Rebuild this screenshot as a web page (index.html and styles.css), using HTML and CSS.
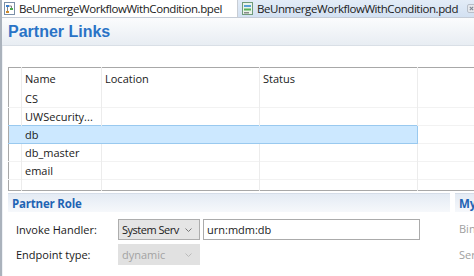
FILE: index.html
```html
<!DOCTYPE html>
<html>
<head>
<meta charset="utf-8">
<link rel="stylesheet" href="styles.css">
</head>
<body>
<div class="window">
  <div class="tabs">
    <div class="tab">
      <svg class="ficon" width="13" height="13" viewBox="0 0 13 13"><rect x="1.5" y="0.5" width="10" height="12" fill="#fff" stroke="#7a8fa8"/><rect x="3" y="3" width="3" height="2" fill="#3a7fd0"/><rect x="7" y="6" width="3" height="2" fill="#4aa84a"/><rect x="3" y="9" width="3" height="2" fill="#d08a2a"/><path d="M4.5 5v4M6 4h2.5v2" stroke="#666" fill="none" stroke-width="0.8"/></svg>
      <span>BeUnmergeWorkflowWithCondition.bpel</span>
    </div>
    <div class="tab active">
      <svg class="ficon" width="13" height="13" viewBox="0 0 13 13"><rect x="1.5" y="0.5" width="10" height="12" fill="#eaf4ea" stroke="#6f9a7a"/><rect x="3" y="3" width="7" height="2" fill="#5aa0d8"/><rect x="3" y="6.5" width="7" height="2" fill="#58b058"/><rect x="3" y="10" width="5" height="1.5" fill="#8a8a8a"/></svg>
      <span>BeUnmergeWorkflowWithCondition.pdd</span>
      <svg class="close" width="9" height="9" viewBox="0 0 9 9"><rect x="0.5" y="0.5" width="8" height="8" rx="1.5" fill="#e6e9ee" stroke="#b7bec8"/><path d="M2.8 2.8l3.4 3.4M6.2 2.8l-3.4 3.4" stroke="#7d8792" stroke-width="1.1"/></svg>
    </div>
  </div>
  <div class="form-header">Partner Links</div>
  <div class="form-body">
    <table class="links">
      <colgroup>
        <col class="c0"><col class="c1"><col class="c2"><col class="c3"><col class="c4">
      </colgroup>
      <thead>
        <tr><th></th><th>Name</th><th>Location</th><th>Status</th><th></th></tr>
      </thead>
      <tbody>
        <tr><td></td><td>CS</td><td></td><td></td><td></td></tr>
        <tr><td></td><td>UWSecurity...</td><td></td><td></td><td></td></tr>
        <tr class="sel"><td></td><td>db</td><td></td><td class="last"></td><td></td></tr>
        <tr><td></td><td>db_master</td><td></td><td></td><td></td></tr>
        <tr><td></td><td>email</td><td></td><td></td><td></td></tr>
        <tr class="empty"><td></td><td></td><td></td><td></td><td></td></tr>
      </tbody>
    </table>
    <div class="sections">
      <section class="sec">
        <div class="sec-title">Partner Role</div>
        <div class="sec-body">
          <div class="field">
            <span class="label">Invoke Handler:</span>
            <div class="combo"><span>System Serv</span><svg class="chev" width="7" height="4" viewBox="0 0 7 4"><path d="M0.5 0.5l3 3 3-3" stroke="#777" fill="none"/></svg></div>
            <div class="text-input">urn:mdm:db</div>
          </div>
          <div class="field">
            <span class="label">Endpoint type:</span>
            <div class="combo disabled"><span>dynamic</span><svg class="chev" width="7" height="4" viewBox="0 0 7 4"><path d="M0.5 0.5l3 3 3-3" stroke="#bbb" fill="none"/></svg></div>
          </div>
        </div>
      </section>
      <section class="sec side">
        <div class="sec-title">My Role</div>
        <div class="side-body">
          <div class="side-label">Binding</div>
          <div class="side-label">Service</div>
          <div class="side-label">Allow</div>
        </div>
      </section>
    </div>
  </div>
</div>
</body>
</html>
```
FILE: styles.css
```css
html, body {
  margin: 0;
  padding: 0;
  background: #fff;
}
body {
  width: 474px;
  height: 276px;
  overflow: hidden;
  font-family: "Open Sans", "Noto Sans", sans-serif;
  font-size: 11px;
  color: #1a1a1a;
}
.window {
  height: 276px;
  overflow: hidden;
  border-left: 2px solid #aab2bc;
  box-shadow: inset 1px 0 0 #eef1f5;
}
.tabs {
  display: flex;
  height: 17px;
  border-bottom: 1px solid #c5ccd6;
  background: #f3f3f3;
}
.tab {
  display: flex;
  align-items: center;
  gap: 3px;
  width: 234px;
  padding-left: 1px;
  background: #fff;
  border-right: 1px solid #c8cdd4;
  white-space: nowrap;
  overflow: hidden;
  font-size: 11.5px;
  letter-spacing: -0.43px;
}
.tab.active {
  flex: 1;
  padding-left: 3px;
  background: linear-gradient(#e3ecf7, #d3e1f2);
  border-right: none;
}
.ficon { flex: none; }
.close { margin-left: 6px; flex: none; }
.form-header {
  height: 27px;
  padding-left: 6px;
  display: flex;
  align-items: center;
  background: linear-gradient(#fbfcfd, #e8edf3);
  border-bottom: 1px solid #d9dfe6;
  font-family: "Liberation Sans", Arial, sans-serif;
  font-weight: bold;
  font-size: 16px;
  color: #2a73c6;
}
.form-body {
  padding: 21px 0 0 6px;
}
.links {
  border-collapse: collapse;
  table-layout: fixed;
  width: 480px;
  border: 1px solid #a8a8a8;
  border-right: none;
}
.c0 { width: 13px; }
.c1 { width: 80px; }
.c2 { width: 158px; }
.c3 { width: 158px; }
.c4 { width: 71px; }
.links th, .links td {
  padding: 0 0 0 3px;
  text-align: left;
  font-weight: normal;
  border-left: 1px solid #ececec;
  white-space: nowrap;
  overflow: hidden;
}
.links th:first-child, .links td:first-child { border-left: none; }
.links th {
  height: 21px;
  line-height: 21px;
  vertical-align: middle;
}
.links td {
  height: 17px;
  line-height: 17px;
  border-top: 1px solid #f2f2f2;
}
.links tbody tr:first-child td { border-top: none; height: 18px; }
.links tr.empty td { height: 10px; }
.links tr.sel td {
  background: #cce8ff;
  border-top: 1px solid #99c9ef;
  border-bottom: 1px solid #99c9ef;
  border-left-color: #cce8ff;
}
.links tr.sel td:first-child { border-left: none; }
.links tr.sel td.last { border-right: 1px solid #99c9ef; }
.links tr.sel td:last-child {
  background: #fff;
  border-left-color: #99c9ef;
  border-top-color: #f2f2f2;
  border-bottom-color: #f2f2f2;
}
.sections {
  display: flex;
  gap: 5px;
  margin-top: 2px;
}
.sec {
  width: 442px;
  flex: none;
}
.sec-title {
  height: 18px;
  padding-left: 4px;
  display: flex;
  align-items: center;
  background: linear-gradient(#e4ebf4, #f6f8fb);
  border-top: 1px solid #d5dde8;
  font-weight: bold;
  font-size: 11.5px;
  color: #1f64b4;
  letter-spacing: -0.2px;
}
.sec-body {
  padding: 7px 0 0 8px;
  display: flex;
  flex-direction: column;
  gap: 4px;
}
.field {
  display: flex;
  align-items: center;
  height: 21px;
}
.label {
  width: 102px;
  flex: none;
}
.combo {
  flex: none;
  display: flex;
  align-items: center;
  justify-content: space-between;
  padding: 0 7px 0 3px;
  box-sizing: border-box;
  width: 82px;
  height: 21px;
  background: #e5e5e5;
  border: 1px solid #adadad;
  white-space: nowrap;
  letter-spacing: -0.5px;
}
.combo.disabled {
  background: #e1e1e1;
  border-color: #e1e1e1;
  color: #a3a3a3;
  letter-spacing: 0;
}
.text-input {
  margin-left: 3px;
  width: 217px;
  height: 21px;
  box-sizing: border-box;
  border: 1px solid #ababab;
  padding-left: 3px;
  line-height: 19px;
  background: #fff;
}
.side {
  width: 60px;
}
.side .sec-title { white-space: nowrap; overflow: hidden; }
.side-body {
  padding: 7px 0 0 4px;
  display: flex;
  flex-direction: column;
  gap: 7px;
  color: #a0a0a0;
  white-space: nowrap;
}
.side-label { height: 19px; line-height: 19px; }
```
